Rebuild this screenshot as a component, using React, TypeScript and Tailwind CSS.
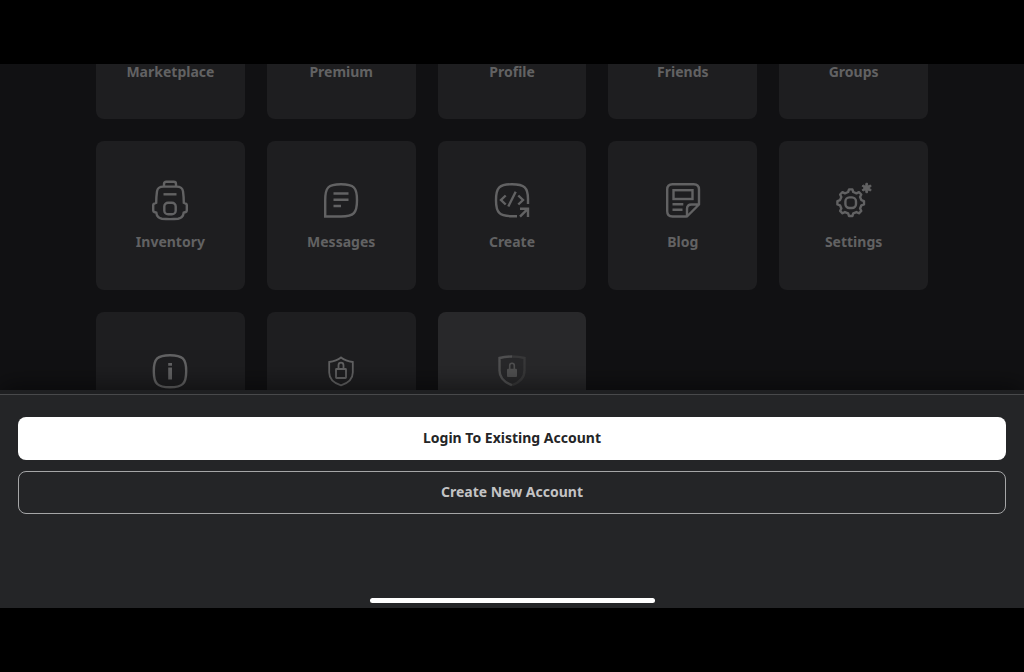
import React from 'react';
import clsx from 'clsx';

type IconProps = { children: React.ReactNode; strokeWidth?: number };

function Icon({ children, strokeWidth = 2.4 }: IconProps) {
  return (
    <svg
      viewBox="0 0 44 44"
      className="h-11 w-11 shrink-0"
      fill="none"
      stroke="currentColor"
      strokeWidth={strokeWidth}
      aria-hidden="true"
    >
      {children}
    </svg>
  );
}

// closed outline alternating between root and tip radius
function gearPath(cx: number, cy: number, outer: number, inner: number, teeth: number) {
  const step = (Math.PI * 2) / teeth;
  const points: string[] = [];
  for (let i = 0; i < teeth; i++) {
    const a = i * step - Math.PI / 2;
    [
      [-0.3, inner],
      [-0.16, outer],
      [0.16, outer],
      [0.3, inner],
    ].forEach(([offset, r]) => {
      const t = a + offset * step;
      points.push(`${(cx + r * Math.cos(t)).toFixed(2)} ${(cy + r * Math.sin(t)).toFixed(2)}`);
    });
  }
  return `M${points.join('L')}Z`;
}

const InventoryIcon = () => (
  <Icon>
    <path d="M16 7.5V5Q16 2.8 18.2 2.8h7.6Q28 2.800 28 5v2.500" />
    <path d="M15.500 7.600h13c4.500 0 6 1.400 6.500 4.800q.8 5.500.8 11.400l2 .8q1 .4 1 1.500v5.400q0 1.100-1.100 1.500l-2 .7c-.5 3.900-2.100 5.500-5.600 6q-8.100.9-16.200 0c-3.500-.5-5.100-2.100-5.600-6l-2-.7q-1.100-.4-1.100-1.500v-5.400q0-1.100 1-1.500l2-.8q0-5.900.8-11.400c.5-3.400 2-4.800 6.500-4.800Z" />
    <path d="M15.500 15.300h13" />
    <rect x="16.300" y="23.700" width="11.400" height="11.600" rx="3.800" />
  </Icon>
);

const MessagesIcon = () => (
  <Icon>
    <path d="M6.200 37.500V21.200C6.200 8.500 9 5.300 22 5.300S38 8.500 38 21.200 35 37.500 22 37.500Z" />
    <path d="M14.500 14.500h15M14.500 20.800h15M14.500 27h7.500" />
  </Icon>
);

const CreateIcon = () => (
  <Icon>
    <path d="M38 25V20C38 8.500 34.500 5.200 22 5.200S6 8.500 6 21.200 9.500 37.200 22 37.200h5" />
    <path d="M25.700 12.700 18.300 27.500M15.700 16.500 11 21l4.700 4.500M28.300 16.500 33 21l-4.700 4.500" />
    <path d="M30 29.700h8V38M37.500 30.200 30 37.700" />
  </Icon>
);

const BlogIcon = () => (
  <Icon>
    <path
      d="M25.500 37.500H11.500Q6.200 37.500 6.200 32.200V10.500Q6.200 5.200 11.500 5.200h21.200Q38 5.200 38 10.500V25.500L26 37.500V30q0-4.500 4.500-4.500H38"
      strokeLinejoin="round"
    />
    <rect x="12.500" y="11.200" width="19" height="8.800" />
    <path d="M11.500 25.300h10.800M11.500 30.700h10" />
  </Icon>
);

const SettingsIcon = () => (
  <Icon>
    <path d={gearPath(18.7, 23.7, 13.4, 11, 8)} strokeLinejoin="round" />
    <rect x="13.400" y="18.400" width="10.600" height="10.600" rx="4" />
    <path
      d={gearPath(34.7, 9, 4.8, 3, 6)}
      fill="currentColor"
      strokeWidth="1"
      strokeLinejoin="round"
    />
  </Icon>
);

const AboutIcon = () => (
  <Icon>
    <path d="M22 5.200C34.500 5.200 38.200 8.500 38.200 21.200S34.500 37.300 22 37.300 5.800 33.900 5.800 21.200 9.500 5.200 22 5.200Z" />
    <path d="M20.200 13h3.800v2.700h-3.800zM20.200 17.500h3.800v12h-3.800z" fill="currentColor" stroke="none" />
  </Icon>
);

const PrivacyIcon = () => (
  <Icon strokeWidth={1.8}>
    <path d="M22 7.500C25.500 10.300 29.500 11.500 33.800 12v10.500C33.800 28.500 29.500 33 22 35.300 14.500 33 10.200 28.500 10.200 22.500V12C14.500 11.500 18.500 10.300 22 7.500Z" />
    <rect x="17" y="19" width="10" height="9" rx=".5" />
    <path d="M19.500 19v-3.800a2.500 2.500 0 0 1 5 0V19" />
  </Icon>
);

const SecurityIcon = () => (
  <Icon>
    <path d="M22 6.500Q15 6.500 9.500 8v12.500C9.500 27.500 13.500 32 22 35.200" />
    <path d="M22 6.500Q29 6.500 34.500 8v12.500C34.500 27.500 30.500 32 22 35.200" className="opacity-40" />
    <rect x="17" y="18.700" width="10" height="8.300" rx="1" fill="currentColor" stroke="none" />
    <path d="M19.700 19.500v-4a2.300 2.300 0 0 1 4.600 0v4" strokeWidth="1.600" />
  </Icon>
);

const topRow = ['Marketplace', 'Premium', 'Profile', 'Friends', 'Groups'];

const middleRow = [
  { label: 'Inventory', icon: <InventoryIcon /> },
  { label: 'Messages', icon: <MessagesIcon /> },
  { label: 'Create', icon: <CreateIcon /> },
  { label: 'Blog', icon: <BlogIcon /> },
  { label: 'Settings', icon: <SettingsIcon /> },
];

const bottomRow = [
  { name: 'About', icon: <AboutIcon />, active: false },
  { name: 'Privacy', icon: <PrivacyIcon />, active: false },
  { name: 'Security', icon: <SecurityIcon />, active: true },
];

function MoreMenu() {
  return (
    <nav className="min-h-0 flex-1 overflow-hidden bg-[#111113] px-24">
      <div className="grid grid-cols-5 gap-[22px] text-sm font-bold text-[#626263]">
        {topRow.map((label) => (
          <a
            key={label}
            href="#"
            className="flex h-[55px] justify-center rounded-b-lg bg-[#1e1e20] leading-4"
          >
            {label}
          </a>
        ))}
        {middleRow.map((item) => (
          <a
            key={item.label}
            href="#"
            className="flex aspect-square flex-col items-center gap-[9px] rounded-lg bg-[#1e1e20] pt-[38px]"
          >
            {item.icon}
            <span>{item.label}</span>
          </a>
        ))}
        {bottomRow.map((item) => (
          <a
            key={item.name}
            href="#"
            aria-label={item.name}
            className={clsx(
              'flex aspect-square flex-col items-center rounded-lg pt-[38px]',
              item.active ? 'bg-[#28282a] text-[#505051]' : 'bg-[#1e1e20]'
            )}
          >
            {item.icon}
          </a>
        ))}
      </div>
    </nav>
  );
}

function AccountSheet() {
  return (
    <section className="relative border-t-4 border-[#1e1f21] bg-[#242527] shadow-[0_-4px_24px_rgba(0,0,0,0.5)]">
      <div className="flex flex-col gap-[11px] border-t border-[#48494b] px-[18px] pt-[22px] text-sm font-bold">
        <button type="button" className="h-[43px] rounded-lg bg-white pb-0.5 text-[#242527]">
          Login To Existing Account
        </button>
        <button
          type="button"
          className="h-[43px] rounded-lg border border-[#a5a6a7] pb-0.5 text-[#c3c3c4]"
        >
          Create New Account
        </button>
      </div>
      <div className="mx-auto mt-[84px] mb-[5px] h-[5px] w-[285px] rounded-full bg-white" />
    </section>
  );
}

export default function App() {
  return (
    <main className="flex h-screen flex-col bg-black py-16 font-['Noto_Sans',sans-serif]">
      <MoreMenu />
      <AccountSheet />
    </main>
  );
}
